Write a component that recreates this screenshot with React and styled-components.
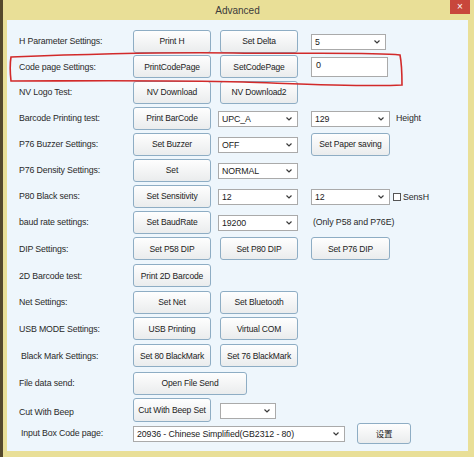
import React from 'react';
import styled, { createGlobalStyle } from 'styled-components';

const Global = createGlobalStyle`
  html, body { margin:0; padding:0; background:#55492c; }
  body { font-family:"Liberation Sans", Arial, sans-serif; }
  #root { width:474px; height:457px; }
`;

const Frame = styled.div`
  position:relative;
  width:474px;
  height:457px;
  box-sizing:border-box;
  background:#e9df97;
  border-left:3px solid #55492c;
  padding:0 6px 6px 4px;
  display:flex;
  flex-direction:column;
  overflow:hidden;
`;

const TitleBar = styled.div`
  height:20px;
  flex-shrink:0;
  display:grid;
  grid-template-columns:1fr auto 1fr;
  align-items:center;
`;

const Title = styled.div`
  grid-column:2;
  font-size:10px;
  color:#3b3b3b;
`;

const Close = styled.div`
  grid-column:3;
  justify-self:end;
  align-self:start;
  width:20px;
  height:14px;
  margin-right:-2px;
  background:#c8463b;
  color:#fff;
  font-size:10px;
  line-height:13px;
  text-align:center;
`;

const Content = styled.div`
  flex:1;
  background:#eef6fc;
  padding:8px 0 0 12px;
  display:flex;
  flex-direction:column;
`;

const Row = styled.div`
  display:grid;
  grid-template-columns:114px 87px 91px 1fr;
  align-items:center;
  height:${p => p.h}px;
  flex-shrink:0;
`;

const Label = styled.div`
  font-size:8.8px;
  letter-spacing:-0.15px;
  color:#2a2a2a;
  padding-left:${p => p.indent || 0}px;
  padding-top:${p => p.drop || 0}px;
  white-space:nowrap;
`;

const Cell = styled.div`
  grid-column:${p => p.col} / span ${p => p.span || 1};
  display:flex;
  align-items:center;
  gap:${p => p.gap || 0}px;
`;

const Button = styled.div`
  width:${p => p.w || 78}px;
  height:${p => p.ht || 23}px;
  box-sizing:border-box;
  border:1px solid #8eadc4;
  border-radius:3px;
  background:linear-gradient(#fefefe, #eaeced);
  display:flex;
  align-items:center;
  justify-content:center;
  font-size:8.5px;
  letter-spacing:-0.15px;
  color:#222;
  white-space:nowrap;
`;

const Select = styled.div`
  width:${p => p.w}px;
  height:16px;
  margin-left:${p => p.shift || 0}px;
  margin-top:2px;
  box-sizing:border-box;
  border:1px solid #aaaaaa;
  background:#fff;
  display:flex;
  align-items:center;
  justify-content:space-between;
  padding:0 5px 0 3px;
  font-size:8.8px;
  letter-spacing:-0.1px;
  color:#222;
  white-space:nowrap;
`;

const Input = styled.div`
  width:77px;
  height:20px;
  box-sizing:border-box;
  border:1px solid #aaaaaa;
  background:#fff;
  padding:2px 4px;
  font-size:9px;
  color:#222;
`;

const Note = styled.span`
  font-size:8.8px;
  letter-spacing:-0.1px;
  color:#2a2a2a;
  white-space:nowrap;
`;

const Check = styled.span`
  width:8px;
  height:8px;
  box-sizing:border-box;
  border:1px solid #555;
  background:#fff;
`;

const Mark = styled.svg`
  position:absolute;
  left:0;
  top:0;
  pointer-events:none;
`;

const Chevron = () => (
  <svg width="6" height="4" viewBox="0 0 6 4">
    <polyline points="0.5,0.5 3,3 5.5,0.5" fill="none" stroke="#3a3a3a" strokeWidth="1.2" />
  </svg>
);

const Drop = ({ w, shift, children }) => (
  <Select w={w} shift={shift}>
    <span>{children}</span>
    <Chevron />
  </Select>
);

export default function App() {
  return (
    <>
      <Global />
      <Frame>
        <TitleBar>
          <Title>Advanced</Title>
          <Close>×</Close>
        </TitleBar>
        <Content>
          <Row h={26}>
            <Label>H Parameter Settings:</Label>
            <Cell col={2}><Button>Print H</Button></Cell>
            <Cell col={3}><Button>Set Delta</Button></Cell>
            <Cell col={4}><Drop w={75}>5</Drop></Cell>
          </Row>
          <Row h={25}>
            <Label>Code page Settings:</Label>
            <Cell col={2}><Button>PrintCodePage</Button></Cell>
            <Cell col={3}><Button>SetCodePage</Button></Cell>
            <Cell col={4}><Input>0</Input></Cell>
          </Row>
          <Row h={26}>
            <Label>NV Logo Test:</Label>
            <Cell col={2}><Button>NV Download</Button></Cell>
            <Cell col={3}><Button>NV Download2</Button></Cell>
          </Row>
          <Row h={26}>
            <Label>Barcode Printing test:</Label>
            <Cell col={2}><Button>Print BarCode</Button></Cell>
            <Cell col={3}><Drop w={80} shift={-2}>UPC_A</Drop></Cell>
            <Cell col={4} gap={6}><Drop w={79}>129</Drop><Note>Height</Note></Cell>
          </Row>
          <Row h={26}>
            <Label>P76 Buzzer Settings:</Label>
            <Cell col={2}><Button>Set Buzzer</Button></Cell>
            <Cell col={3}><Drop w={80} shift={-2}>OFF</Drop></Cell>
            <Cell col={4}><Button w={79}>Set Paper saving</Button></Cell>
          </Row>
          <Row h={26}>
            <Label>P76 Density Settings:</Label>
            <Cell col={2}><Button>Set</Button></Cell>
            <Cell col={3}><Drop w={80} shift={-2}>NORMAL</Drop></Cell>
          </Row>
          <Row h={26}>
            <Label>P80 Black sens:</Label>
            <Cell col={2}><Button>Set Sensitivity</Button></Cell>
            <Cell col={3}><Drop w={80} shift={-2}>12</Drop></Cell>
            <Cell col={4}>
              <Drop w={79}>12</Drop>
              <Check style={{ marginLeft: 3, marginTop: 2 }} />
              <Note style={{ marginLeft: 2, marginTop: 2 }}>SensH</Note>
            </Cell>
          </Row>
          <Row h={26}>
            <Label>baud rate settings:</Label>
            <Cell col={2}><Button>Set BaudRate</Button></Cell>
            <Cell col={3}><Drop w={80} shift={-2}>19200</Drop></Cell>
            <Cell col={4}><Note style={{ marginLeft: 2 }}>(Only P58 and P76E)</Note></Cell>
          </Row>
          <Row h={27}>
            <Label>DIP Settings:</Label>
            <Cell col={2}><Button>Set P58 DIP</Button></Cell>
            <Cell col={3}><Button>Set P80 DIP</Button></Cell>
            <Cell col={4}><Button w={79}>Set P76 DIP</Button></Cell>
          </Row>
          <Row h={27}>
            <Label>2D Barcode test:</Label>
            <Cell col={2}><Button>Print 2D Barcode</Button></Cell>
          </Row>
          <Row h={26}>
            <Label>Net Settings:</Label>
            <Cell col={2}><Button>Set Net</Button></Cell>
            <Cell col={3}><Button>Set Bluetooth</Button></Cell>
          </Row>
          <Row h={27}>
            <Label>USB MODE Settings:</Label>
            <Cell col={2}><Button>USB Printing</Button></Cell>
            <Cell col={3}><Button>Virtual COM</Button></Cell>
          </Row>
          <Row h={27}>
            <Label indent={2}>Black Mark Settings:</Label>
            <Cell col={2}><Button>Set 80 BlackMark</Button></Cell>
            <Cell col={3}><Button>Set 76 BlackMark</Button></Cell>
          </Row>
          <Row h={28}>
            <Label>File data send:</Label>
            <Cell col={2} span={2}><Button w={114}>Open File Send</Button></Cell>
          </Row>
          <Row h={25}>
            <Label drop={5}>Cut With Beep</Label>
            <Cell col={2}><Button ht={24}>Cut With Beep Set</Button></Cell>
            <Cell col={3}><Drop w={56}></Drop></Cell>
          </Row>
          <Row h={22}>
            <Label indent={2}>Input Box Code page:</Label>
            <Cell col={2} span={3} gap={12}>
              <Drop w={212}>20936 - Chinese Simplified(GB2312 - 80)</Drop>
              <Button w={54} ht={21} style={{ fontFamily: '"Noto Sans CJK SC", sans-serif' }}>设置</Button>
            </Cell>
          </Row>
        </Content>
        <Mark width="474" height="457" viewBox="0 0 474 457">
          <path
            d="M 8 57 C 60 55, 150 52, 230 53 C 300 54, 370 52, 397 55 C 399 65, 399 76, 399 85 C 360 87, 300 84, 240 82 C 160 80, 70 81, 8 81 C 7 72, 7 63, 8 57 Z"
            fill="none"
            stroke="#d22a2a"
            strokeWidth="1.6"
          />
        </Mark>
      </Frame>
    </>
  );
}
